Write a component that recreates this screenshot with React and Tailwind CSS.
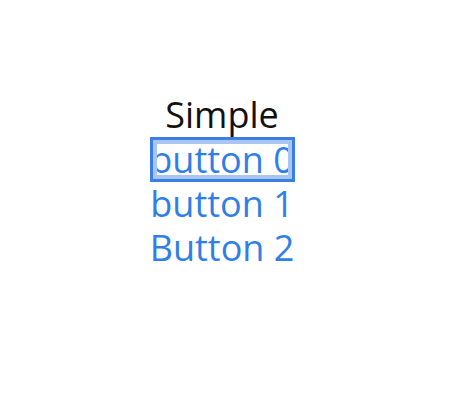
export default function App() {
  const font = { fontFamily: '"Open Sans", "Noto Sans", sans-serif' };
  return (
    <div className="w-[466px] h-[406px] bg-white flex justify-center pr-[22px]" style={font}>
      <div className="flex flex-col items-center pt-[92px]">
        <div className="text-[36px] leading-[45px] text-[#111111]">Simple</div>
        <div className="w-[145px] h-[45px] border-[3px] border-[#3b7fe6] bg-[#a9c6f0] p-[4px]">
          <div className="w-full h-full bg-white overflow-hidden flex justify-center items-center">
            <span className="text-[36px] leading-[37px] text-[#2f7fe6] whitespace-nowrap">button 0</span>
          </div>
        </div>
        <div className="text-[36px] leading-[44px] text-[#2f7fe6]">button 1</div>
        <div className="text-[36px] leading-[44px] text-[#2f7fe6]">Button 2</div>
      </div>
    </div>
  );
}
